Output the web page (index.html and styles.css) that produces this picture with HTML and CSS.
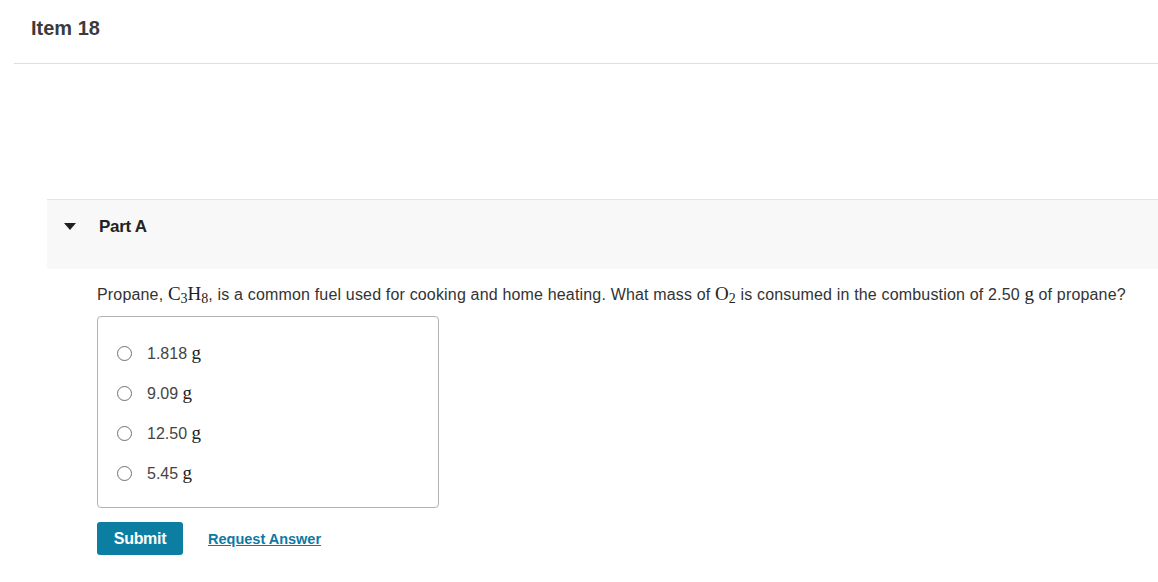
FILE: index.html
```html
<!DOCTYPE html>
<html lang="en">
<head>
<meta charset="utf-8">
<title>Item 18</title>
<link rel="stylesheet" href="styles.css">
</head>
<body>
<header class="item-head">
  <h1 class="item-title">Item 18</h1>
</header>
<section class="part">
  <div class="part-head">
    <span class="caret"></span>
    <h2 class="part-title">Part A</h2>
  </div>
  <div class="part-body">
    <p class="question">Propane, <span class="m">C<sub>3</sub>H<sub>8</sub></span>, is a common fuel used for cooking and home heating. What mass of <span class="m">O<sub>2</sub></span> is consumed in the combustion of 2.50 <span class="m">g</span> of propane?</p>
    <div class="choices">
      <label class="choice"><span class="radio"></span><span class="choice-text">1.818 <span class="m">g</span></span></label>
      <label class="choice"><span class="radio"></span><span class="choice-text">9.09 <span class="m">g</span></span></label>
      <label class="choice"><span class="radio"></span><span class="choice-text">12.50 <span class="m">g</span></span></label>
      <label class="choice"><span class="radio"></span><span class="choice-text">5.45 <span class="m">g</span></span></label>
    </div>
    <div class="actions">
      <button class="submit" type="button">Submit</button>
      <a class="request" href="#">Request Answer</a>
    </div>
  </div>
</section>
</body>
</html>
```
FILE: styles.css
```css
html, body {
  margin: 0;
  padding: 0;
  background: #fff;
  font-family: "Liberation Sans", Arial, sans-serif;
  color: #333;
}

.item-head {
  margin-left: 14px;
  padding: 17px 0 23px 17px;
  border-bottom: 1px solid #e0e0e0;
}

.item-title {
  margin: 0;
  font-size: 20px;
  line-height: 23px;
  font-weight: bold;
  color: #3b3b3b;
}

.part {
  margin-top: 135px;
  margin-left: 47px;
}

.part-head {
  display: flex;
  align-items: flex-start;
  height: 52px;
  border-top: 1px solid #e4e4e4;
  background: #f8f8f8;
  padding: 17px 0 0 17px;
}

.caret {
  width: 0;
  height: 0;
  border-left: 6.5px solid transparent;
  border-right: 6.5px solid transparent;
  border-top: 7px solid #1f1f1f;
  margin-right: 23px;
  margin-top: 6px;
}

.part-title {
  margin: 0;
  font-size: 17px;
  line-height: 20px;
  font-weight: bold;
  color: #222;
  letter-spacing: -0.3px;
}

.part-body {
  padding-left: 50px;
}

.question {
  margin: 14px 0 9px;
  font-size: 16px;
  line-height: 24px;
  color: #333;
  letter-spacing: 0.17px;
}

.m {
  font-family: "Liberation Serif", "Times New Roman", serif;
  font-size: 19px;
  line-height: 1;
  color: #222;
  letter-spacing: 0;
}

.m sub {
  font-size: 14px;
  vertical-align: -3px;
  line-height: 1;
}

.choices {
  border: 1px solid #b3b3b3;
  border-radius: 4px;
  padding: 16px 0 14px 19px;
  width: 321px;
}

.choice {
  display: flex;
  align-items: center;
  height: 40px;
  font-size: 16px;
  color: #444;
}

.radio {
  width: 13px;
  height: 13px;
  border: 1.2px solid #707070;
  border-radius: 50%;
  margin-right: 15px;
  flex: none;
}

.actions {
  display: flex;
  align-items: center;
  margin-top: 14px;
  gap: 25px;
}

.submit {
  width: 86px;
  height: 33px;
  border: none;
  border-radius: 3px;
  background: #0b7ea1;
  color: #fff;
  font-family: "Liberation Sans", Arial, sans-serif;
  font-size: 16px;
  font-weight: bold;
  letter-spacing: -0.3px;
  padding: 0;
}

.request {
  color: #0d7aa3;
  font-size: 14.5px;
  font-weight: bold;
  text-decoration: underline;
}
```
